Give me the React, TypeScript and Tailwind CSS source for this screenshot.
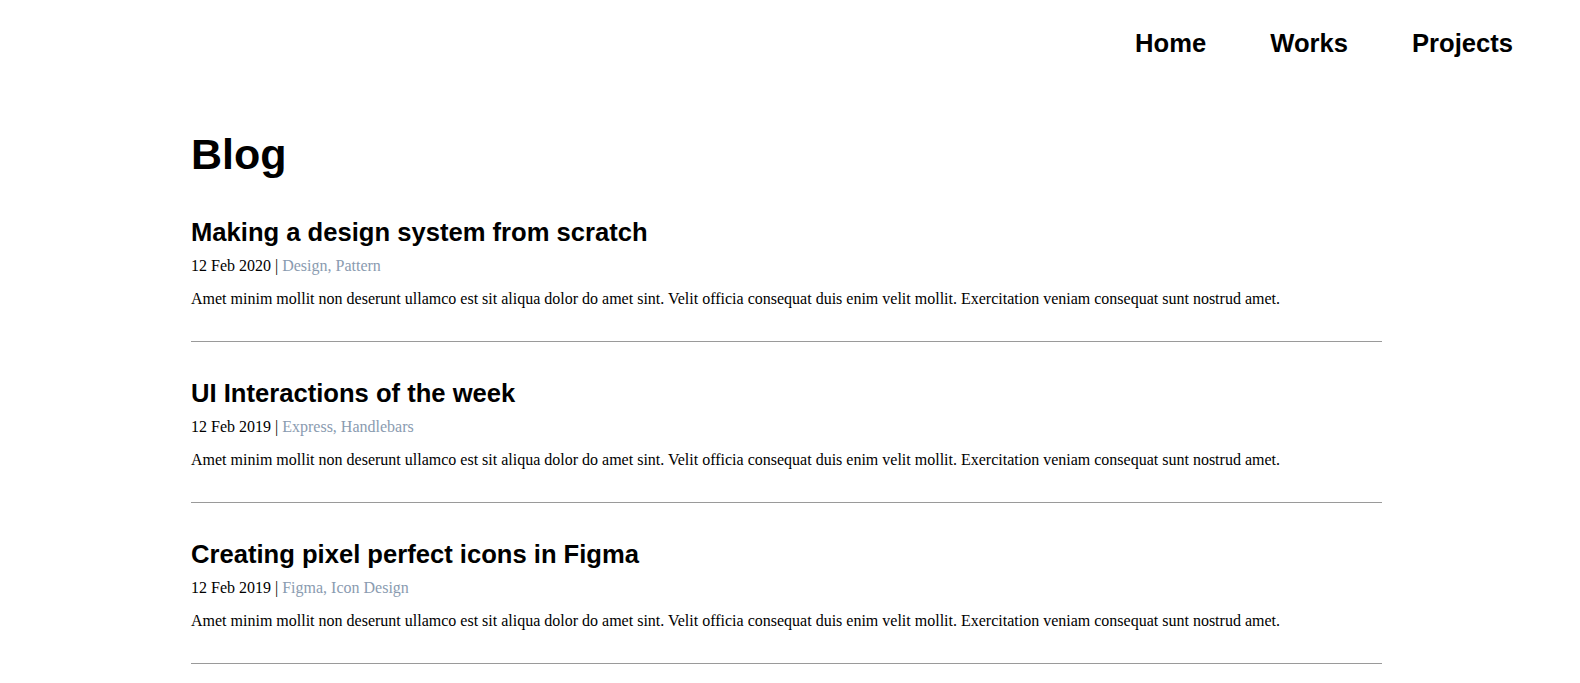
import React from "react";

const posts = [
  { title: "Making a design system from scratch", date: "12 Feb 2020", tags: "Design, Pattern" },
  { title: "UI Interactions of the week", date: "12 Feb 2019", tags: "Express, Handlebars" },
  { title: "Creating pixel perfect icons in Figma", date: "12 Feb 2019", tags: "Figma, Icon Design" },
];

const body =
  "Amet minim mollit non deserunt ullamco est sit aliqua dolor do amet sint. Velit officia consequat duis enim velit mollit. Exercitation veniam consequat sunt nostrud amet.";

export default function App() {
  return (
    <div className="h-[683px] w-full overflow-hidden bg-white text-black">
      <header className="flex justify-end pt-[29px] pr-[67px] font-['Liberation_Sans',Arial,sans-serif]">
        <nav className="flex gap-[64px] text-[25.6px] font-bold leading-[29px]">
          <a href="#">Home</a>
          <a href="#">Works</a>
          <a href="#">Projects</a>
        </nav>
      </header>
      <main className="ml-[191px] w-[1191px]">
        <h1 className="mt-[75px] font-['Liberation_Sans',Arial,sans-serif] text-[43px] font-bold leading-[43px]">
          Blog
        </h1>
        <div className="mt-[41px]">
          {posts.map((p, i) => (
            <article key={i} className={i === 0 ? "" : "pt-[36px]"}>
              <h2 className="font-['Liberation_Sans',Arial,sans-serif] text-[25.6px] font-bold leading-[30px]">
                {p.title}
              </h2>
              <p className="mt-[10px] font-['Liberation_Serif','Times_New_Roman',serif] text-[16px] leading-[18px]">
                {p.date} | <span className="text-[#8a9bb0]">{p.tags}</span>
              </p>
              <p className="mt-[15px] font-['Liberation_Serif','Times_New_Roman',serif] text-[16px] leading-[18px]">
                {body}
              </p>
              <hr className="mt-[33px] border-0 border-t border-[#9a9a9a]" />
            </article>
          ))}
        </div>
      </main>
    </div>
  );
}
